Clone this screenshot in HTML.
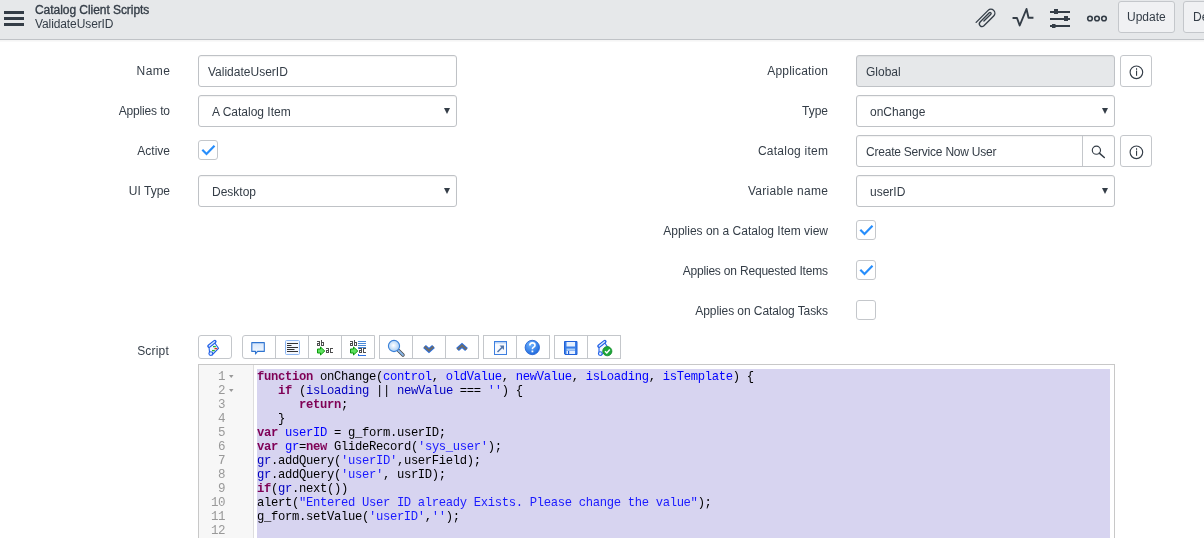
<!DOCTYPE html>
<html><head><meta charset="utf-8">
<style>
*{box-sizing:border-box}
html,body{margin:0;padding:0}
body{will-change:transform;width:1204px;height:538px;overflow:hidden;position:relative;background:#fff;font-family:"Liberation Sans",sans-serif;color:#343d47;font-size:12px}
.a{position:absolute}
.hdr{position:absolute;left:0;top:0;width:1204px;height:40px;background:#e6e8ea;border-bottom:1px solid #c0c3c7}
.shadow{position:absolute;left:0;top:40px;width:1204px;height:2px;background:linear-gradient(#f3f3f3,#fbfbfb)}
.bar{position:absolute;left:4px;width:20px;height:3px;background:#343d47}
.lbl{position:absolute;text-align:right;white-space:nowrap;line-height:14px}
.lbl.l{right:1034px}
.lbl.r{right:376px}
.fc{position:absolute;height:32px;border:1px solid #bfc2c6;border-radius:3px;background:#fff;box-shadow:inset 0 1px 1px rgba(0,0,0,.05);white-space:nowrap;line-height:14px}
.fc span{position:absolute;top:0}
.cb{position:absolute;width:20px;height:20px;border:1px solid #c4c7cb;border-radius:3px;background:#fff}
.tri{position:absolute;width:0;height:0;border-left:3px solid transparent;border-right:3px solid transparent;border-top:6px solid #343d47}
.ib{position:absolute;width:32px;height:32px;border:1px solid #c4c7cb;border-radius:3px;background:#fff}
.tb{position:absolute;top:335px;height:24px;border:1px solid #c4c7cb;background:#fff}
.tb.r{border-radius:3px}
.dv{position:absolute;top:335px;height:24px;width:1px;background:#c4c7cb}
.ed{position:absolute;left:198px;top:364px;width:917px;height:200px;border:1px solid #c8c8c8;background:#fff}
.gut{position:absolute;left:199px;top:365px;width:55px;height:180px;background:#f7f7f7;border-right:1px solid #ddd}
.sel{position:absolute;left:257px;top:369px;width:853px;height:180px;background:#d7d4f0}
.ln{position:absolute;left:199px;width:26px;text-align:right;font-family:"Liberation Mono",monospace;font-size:12.5px;letter-spacing:-0.5px;color:#999;line-height:14px}
.code{position:absolute;left:257px;top:370px;font-family:"Liberation Mono",monospace;font-size:12.2px;letter-spacing:-0.32px;line-height:14px;color:#000;white-space:pre}
.k{color:#7f0055;font-weight:bold}
.d{color:#0000ff}
.v2{color:#0000c0}
.s{color:#1a1aff}
</style></head><body>
<div class="hdr"></div>
<div class="shadow"></div>
<div class="bar" style="top:11px"></div>
<div class="bar" style="top:17px"></div>
<div class="bar" style="top:23px"></div>
<div class="a" style="left:35px;top:3px;font-size:12px;line-height:14px;letter-spacing:-0.05px;-webkit-text-stroke:0.35px #343d47;white-space:nowrap">Catalog Client Scripts</div>
<div class="a" style="left:35px;top:17px;font-size:12px;line-height:14px;letter-spacing:-0.1px;white-space:nowrap">ValidateUserID</div>

<div class="a" style="left:1118px;top:1px;width:57px;height:32px;border:1px solid #c4c7cb;border-radius:3px;background:#f0f1f3"></div>
<div class="a" style="left:1127px;top:10px;font-size:12px;line-height:14px;white-space:nowrap">Update</div>
<div class="a" style="left:1183px;top:1px;width:57px;height:32px;border:1px solid #c4c7cb;border-radius:3px;background:#f0f1f3"></div>
<div class="a" style="left:1193px;top:10px;font-size:12px;line-height:14px;white-space:nowrap">Delete</div>

<!-- left labels -->
<div class="lbl l" style="top:64px;letter-spacing:0.5px;margin-right:-0.5px">Name</div>
<div class="lbl l" style="top:104px;letter-spacing:-0.15px;margin-right:0.15px">Applies to</div>
<div class="lbl l" style="top:144px">Active</div>
<div class="lbl l" style="top:184px">UI Type</div>
<div class="lbl l" style="top:344px;letter-spacing:0.2px;margin-right:1px">Script</div>

<div class="fc" style="left:198px;top:55px;width:259px"><span style="left:9px;top:9px">ValidateUserID</span></div>
<div class="fc" style="left:198px;top:95px;width:259px"><span style="left:13px;top:9px">A Catalog Item</span><div class="tri" style="left:245px;top:12px"></div></div>
<div class="cb" style="left:198px;top:140px"></div>
<div class="fc" style="left:198px;top:175px;width:259px"><span style="left:13px;top:9px">Desktop</span><div class="tri" style="left:245px;top:12px"></div></div>

<!-- right labels -->
<div class="lbl r" style="top:64px;letter-spacing:0.2px;margin-right:-0.2px">Application</div>
<div class="lbl r" style="top:104px">Type</div>
<div class="lbl r" style="top:144px;letter-spacing:0.25px;margin-right:-0.25px">Catalog item</div>
<div class="lbl r" style="top:184px;letter-spacing:0.3px;margin-right:-0.3px">Variable name</div>
<div class="lbl r" style="top:224px">Applies on a Catalog Item view</div>
<div class="lbl r" style="top:264px;letter-spacing:-0.19px;margin-right:0.19px">Applies on Requested Items</div>
<div class="lbl r" style="top:304px;letter-spacing:-0.08px;margin-right:0.08px">Applies on Catalog Tasks</div>

<div class="fc" style="left:856px;top:55px;width:259px;background:#e6e8ea"><span style="left:9px;top:9px">Global</span></div>
<div class="ib" style="left:1120px;top:55px"></div>
<div class="fc" style="left:856px;top:95px;width:259px"><span style="left:13px;top:9px">onChange</span><div class="tri" style="left:245px;top:12px"></div></div>
<div class="fc" style="left:856px;top:135px;width:259px"><span style="left:9px;top:9px;letter-spacing:-0.22px">Create Service Now User</span><div style="position:absolute;left:225px;top:0;width:1px;height:30px;background:#c4c7cb"></div></div>
<div class="ib" style="left:1120px;top:135px"></div>
<div class="fc" style="left:856px;top:175px;width:259px"><span style="left:13px;top:9px">userID</span><div class="tri" style="left:245px;top:12px"></div></div>
<div class="cb" style="left:856px;top:220px"></div>
<div class="cb" style="left:856px;top:260px"></div>
<div class="cb" style="left:856px;top:300px"></div>

<!-- toolbar -->
<div class="tb r" style="left:198px;width:34px"></div>
<div class="tb" style="left:242px;width:133px;border-radius:3px 0 0 3px"></div>
<div class="dv" style="left:275px"></div><div class="dv" style="left:308px"></div><div class="dv" style="left:341px"></div>
<div class="tb" style="left:379px;width:100px"></div>
<div class="dv" style="left:412px"></div><div class="dv" style="left:445px"></div>
<div class="tb" style="left:483px;width:67px"></div>
<div class="dv" style="left:516px"></div>
<div class="tb" style="left:554px;width:67px"></div>
<div class="dv" style="left:587px"></div>

<!-- editor -->
<div class="ed"></div>
<div class="gut"></div>
<div class="sel"></div>
<div class="code"><span class="k">function</span> onChange(<span class="d">control</span>, <span class="d">oldValue</span>, <span class="d">newValue</span>, <span class="d">isLoading</span>, <span class="d">isTemplate</span>) {
   <span class="k">if</span> (<span class="v2">isLoading</span> || <span class="v2">newValue</span> === <span class="s">''</span>) {
      <span class="k">return</span>;
   }
<span class="k">var</span> <span class="d">userID</span> = g_form.userID;
<span class="k">var</span> <span class="d">gr</span>=<span class="k">new</span> GlideRecord(<span class="s">'sys_user'</span>);
<span class="v2">gr</span>.addQuery(<span class="s">'userID'</span>,userField);
<span class="v2">gr</span>.addQuery(<span class="s">'user'</span>, usrID);
<span class="k">if</span>(<span class="v2">gr</span>.next())
alert(<span class="s">"Entered User ID already Exists. Please change the value"</span>);
g_form.setValue(<span class="s">'userID'</span>,<span class="s">''</span>);
</div>
<svg class="a" style="left:0;top:0" width="1204" height="538"><path d="M229,375 h4.5 l-2.25,3 z M229,389 h4.5 l-2.25,3 z" fill="#999"/></svg>
<div class="ln" style="top:370px">1<br>2<br>3<br>4<br>5<br>6<br>7<br>8<br>9<br>10<br>11<br>12</div>

<svg class="a" style="left:0;top:0" width="1204" height="538" viewBox="0 0 1204 538">
 <g fill="none" stroke="#343d47" stroke-width="1.6" stroke-linecap="round" stroke-linejoin="round">
  <path stroke-width="1.35" d="M976.13,22.37 L988.11,10.38 A3.95,3.95 0 0 1 993.7,15.97 L983.9,25.76 A2.7,2.7 0 0 1 980.09,21.94 L989.31,12.72 A1.05,1.05 0 0 1 990.8,14.2 L983.9,21.1"/>
  <polyline stroke-width="1.9" stroke-linecap="square" points="1013.5,18 1017,18 1019.7,25.5 1026.5,9 1028.5,17.8 1032.5,17.8"/>
  <circle cx="1090" cy="18.5" r="2.3"/><circle cx="1097" cy="18.5" r="2.3"/><circle cx="1104" cy="18.5" r="2.3"/>
  <circle cx="1136.4" cy="72.3" r="6.3" stroke-width="1.15"/>
  <circle cx="1136.4" cy="152.3" r="6.3" stroke-width="1.15"/>
  <circle cx="1096.4" cy="150.2" r="4.1" stroke-width="1.15"/>
  <line x1="1099.3" y1="153.1" x2="1104.3" y2="157.5" stroke-width="1.5"/>
 </g>
 <g fill="#343d47">
  <rect x="1050" y="11" width="20" height="2"/><rect x="1054" y="9" width="4" height="5"/>
  <rect x="1050" y="18" width="20" height="2"/><rect x="1064" y="16" width="4" height="5"/>
  <rect x="1050" y="25" width="20" height="2"/><rect x="1052" y="24" width="3.5" height="4"/>
  <rect x="1136" y="68.2" width="1.1" height="1.6"/><rect x="1136" y="70.6" width="1.1" height="5.2"/>
  <rect x="1136" y="148.2" width="1.1" height="1.6"/><rect x="1136" y="150.6" width="1.1" height="5.2"/>
 </g>
 <g fill="none" stroke="#278efc" stroke-width="2.2" stroke-linecap="butt" stroke-linejoin="miter">
  <polyline points="202.3,149.8 206.5,154 214.5,145.8"/>
  <polyline points="860.3,229.8 864.5,234 872.5,225.8"/>
  <polyline points="860.3,269.8 864.5,274 872.5,265.8"/>
 </g>
</svg>

<svg class="a" style="left:0;top:0" width="1204" height="538" viewBox="0 0 1204 538">
 <defs>
  <linearGradient id="lb" x1="0" y1="0" x2="0" y2="1"><stop offset="0" stop-color="#d6e6fb"/><stop offset="1" stop-color="#f7fbff"/></linearGradient>
  <radialGradient id="mg" cx="0.45" cy="0.45" r="0.6"><stop offset="0" stop-color="#ffffff"/><stop offset="1" stop-color="#9cc8f5"/></radialGradient>
  <radialGradient id="hg" cx="0.4" cy="0.3" r="0.8"><stop offset="0" stop-color="#6fb3ff"/><stop offset="1" stop-color="#1560d8"/></radialGradient>
 </defs>
 <!-- scroll 1 -->
 <path d="M209,347 L214.5,342.5 L218.5,348.3 L212,355 L209.5,352 Z" fill="#f0f6ff" stroke="#1f5fe6" stroke-width="1.1" stroke-linejoin="round"/>
 <line x1="209" y1="346.2" x2="214.8" y2="341.6" stroke="#1f5fe6" stroke-width="3.6" stroke-linecap="round"/>
 <line x1="209.3" y1="346" x2="214.5" y2="341.8" stroke="#dfeaff" stroke-width="1.4" stroke-linecap="round"/>
 <circle cx="210.8" cy="353.6" r="1.9" fill="#dfeaff" stroke="#1f5fe6" stroke-width="1.1"/>
 <g stroke-width="1.3">
  <line x1="213" y1="346.6" x2="215.8" y2="346.6" stroke="#2ab52a"/>
  <line x1="214.5" y1="348.6" x2="217.2" y2="348.6" stroke="#e23b1a"/>
  <line x1="212" y1="350.6" x2="214.8" y2="350.6" stroke="#2ab52a"/>
 </g>
 <!-- comment -->
 <path d="M251.8,342.6 H264.3 V351.4 H257.5 L255.5,354 V351.4 H251.8 Z" fill="url(#lb)" stroke="#2f74d0" stroke-width="1.1" stroke-linejoin="round"/>
 <!-- format -->
 <rect x="285.5" y="340.5" width="14" height="14" rx="1" fill="#f4f8ff" stroke="#8cb6f2" stroke-width="1"/>
 <g stroke="#333" stroke-width="1">
  <line x1="287" y1="343.5" x2="298" y2="343.5"/><line x1="287" y1="345.5" x2="291.5" y2="345.5"/>
  <line x1="287" y1="347.5" x2="298" y2="347.5"/><line x1="287" y1="349.5" x2="294.5" y2="349.5"/>
  <line x1="287" y1="351.5" x2="298" y2="351.5"/>
 </g>
 <!-- replace -->
 <g fill="#4d4d4d"><rect x="317" y="341" width="1" height="1"/><rect x="318" y="341" width="1" height="1"/><rect x="319" y="341" width="1" height="1"/><rect x="319" y="342" width="1" height="1"/><rect x="317" y="343" width="1" height="1"/><rect x="318" y="343" width="1" height="1"/><rect x="319" y="343" width="1" height="1"/><rect x="317" y="344" width="1" height="1"/><rect x="319" y="344" width="1" height="1"/><rect x="317" y="345" width="1" height="1"/><rect x="318" y="345" width="1" height="1"/><rect x="319" y="345" width="1" height="1"/><rect x="321" y="340" width="1" height="1"/><rect x="321" y="341" width="1" height="1"/><rect x="321" y="342" width="1" height="1"/><rect x="322" y="342" width="1" height="1"/><rect x="323" y="342" width="1" height="1"/><rect x="321" y="343" width="1" height="1"/><rect x="323" y="343" width="1" height="1"/><rect x="321" y="344" width="1" height="1"/><rect x="323" y="344" width="1" height="1"/><rect x="321" y="345" width="1" height="1"/><rect x="322" y="345" width="1" height="1"/><rect x="323" y="345" width="1" height="1"/><rect x="326" y="348" width="1" height="1"/><rect x="327" y="348" width="1" height="1"/><rect x="328" y="348" width="1" height="1"/><rect x="328" y="349" width="1" height="1"/><rect x="326" y="350" width="1" height="1"/><rect x="327" y="350" width="1" height="1"/><rect x="328" y="350" width="1" height="1"/><rect x="326" y="351" width="1" height="1"/><rect x="328" y="351" width="1" height="1"/><rect x="326" y="352" width="1" height="1"/><rect x="327" y="352" width="1" height="1"/><rect x="328" y="352" width="1" height="1"/><rect x="330" y="348" width="1" height="1"/><rect x="331" y="348" width="1" height="1"/><rect x="332" y="348" width="1" height="1"/><rect x="330" y="349" width="1" height="1"/><rect x="330" y="350" width="1" height="1"/><rect x="330" y="351" width="1" height="1"/><rect x="330" y="352" width="1" height="1"/><rect x="331" y="352" width="1" height="1"/><rect x="332" y="352" width="1" height="1"/><rect x="350" y="341" width="1" height="1"/><rect x="351" y="341" width="1" height="1"/><rect x="352" y="341" width="1" height="1"/><rect x="352" y="342" width="1" height="1"/><rect x="350" y="343" width="1" height="1"/><rect x="351" y="343" width="1" height="1"/><rect x="352" y="343" width="1" height="1"/><rect x="350" y="344" width="1" height="1"/><rect x="352" y="344" width="1" height="1"/><rect x="350" y="345" width="1" height="1"/><rect x="351" y="345" width="1" height="1"/><rect x="352" y="345" width="1" height="1"/><rect x="354" y="340" width="1" height="1"/><rect x="354" y="341" width="1" height="1"/><rect x="354" y="342" width="1" height="1"/><rect x="355" y="342" width="1" height="1"/><rect x="356" y="342" width="1" height="1"/><rect x="354" y="343" width="1" height="1"/><rect x="356" y="343" width="1" height="1"/><rect x="354" y="344" width="1" height="1"/><rect x="356" y="344" width="1" height="1"/><rect x="354" y="345" width="1" height="1"/><rect x="355" y="345" width="1" height="1"/><rect x="356" y="345" width="1" height="1"/><rect x="359" y="348" width="1" height="1"/><rect x="360" y="348" width="1" height="1"/><rect x="361" y="348" width="1" height="1"/><rect x="361" y="349" width="1" height="1"/><rect x="359" y="350" width="1" height="1"/><rect x="360" y="350" width="1" height="1"/><rect x="361" y="350" width="1" height="1"/><rect x="359" y="351" width="1" height="1"/><rect x="361" y="351" width="1" height="1"/><rect x="359" y="352" width="1" height="1"/><rect x="360" y="352" width="1" height="1"/><rect x="361" y="352" width="1" height="1"/><rect x="363" y="348" width="1" height="1"/><rect x="364" y="348" width="1" height="1"/><rect x="365" y="348" width="1" height="1"/><rect x="363" y="349" width="1" height="1"/><rect x="363" y="350" width="1" height="1"/><rect x="363" y="351" width="1" height="1"/><rect x="363" y="352" width="1" height="1"/><rect x="364" y="352" width="1" height="1"/><rect x="365" y="352" width="1" height="1"/></g>
 <path d="M317.5,349 H320.5 V347 L324.8,351 L320.5,355 V353 H317.5 Z" fill="#5fe05f" stroke="#0a9a0a" stroke-width="1"/>
 <path d="M350.5,349 H353.5 V347 L357.8,351 L353.5,355 V353 H350.5 Z" fill="#5fe05f" stroke="#0a9a0a" stroke-width="1"/>
 <g fill="#4a8ad8">
  <rect x="358" y="341" width="8" height="1"/><rect x="358" y="343" width="8" height="1"/>
  <rect x="358" y="345" width="8" height="1"/><rect x="358" y="347" width="8" height="1"/>
  <rect x="358" y="348" width="1" height="1"/>
  <rect x="358" y="355" width="8" height="1" fill="#2d6fe0"/><rect x="358" y="354" width="1" height="1" fill="#2d6fe0"/>
 </g>
 <!-- search -->
 <line x1="398.5" y1="350.5" x2="403" y2="355" stroke="#444" stroke-width="3.4" stroke-linecap="round"/>
 <line x1="398.5" y1="350.5" x2="403" y2="355" stroke="#8ab8ea" stroke-width="1.8" stroke-linecap="round"/>
 <circle cx="394" cy="346" r="5.6" fill="url(#mg)" stroke="#3a80d8" stroke-width="1.1"/>
 <!-- chevrons -->
 <polyline points="424.5,346.5 429,350.5 433.5,346.5" fill="none" stroke="#2a6fe0" stroke-width="4.2" stroke-linejoin="miter"/>
 <polyline points="424.5,346.5 429,350.5 433.5,346.5" fill="none" stroke="#6b6b6b" stroke-width="2.2" stroke-linejoin="miter"/>
 <polyline points="457.5,349.5 462,345.5 466.5,349.5" fill="none" stroke="#2a6fe0" stroke-width="4.2" stroke-linejoin="miter"/>
 <polyline points="457.5,349.5 462,345.5 466.5,349.5" fill="none" stroke="#6b6b6b" stroke-width="2.2" stroke-linejoin="miter"/>
 <!-- fullscreen -->
 <rect x="494.5" y="341.5" width="12" height="13" fill="#f6f9ff" stroke="#3d7fe0" stroke-width="1"/>
 <line x1="495" y1="342.8" x2="506" y2="342.8" stroke="#a9c8f2" stroke-width="1.2"/>
 <line x1="497.5" y1="352" x2="503" y2="346.5" stroke="#5577aa" stroke-width="1.6"/>
 <path d="M499.5,345.5 H504 V350 Z" fill="#5577aa"/>
 <!-- help -->
 <circle cx="532.3" cy="347.5" r="7.2" fill="url(#hg)" stroke="#1a5cd0" stroke-width="0.8"/>
 <path d="M529.8,345.6 Q529.8,342.9 532.4,342.9 Q535,342.9 535,345.2 Q535,346.6 533.3,347.4 Q532.4,347.9 532.4,349.3" fill="none" stroke="#fff" stroke-width="1.6"/>
 <rect x="531.5" y="350.5" width="1.8" height="1.8" fill="#fff"/>
 <!-- save -->
 <path d="M564.5,341.5 H577 V354.5 H565 L564.5,354 Z" fill="#3a7fe8" stroke="#2060d8" stroke-width="1"/>
 <rect x="566.5" y="342" width="8.5" height="4.5" fill="#e6f0ff"/>
 <rect x="566.5" y="348.5" width="8.5" height="1.5" fill="#a8cdf8"/>
 <rect x="566.5" y="350.5" width="8.5" height="3.5" fill="#e6f0ff"/>
 <rect x="568" y="351" width="1.2" height="3" fill="#2060d8"/>
 <!-- scroll check -->
 <path d="M599,347 L604.5,342.5 L608,347.5 L601.5,355 L599,352 Z" fill="#f0f6ff" stroke="#1f5fe6" stroke-width="1.1" stroke-linejoin="round"/>
 <line x1="599" y1="346.2" x2="604.8" y2="341.6" stroke="#1f5fe6" stroke-width="3.6" stroke-linecap="round"/>
 <line x1="599.3" y1="346" x2="604.5" y2="341.8" stroke="#dfeaff" stroke-width="1.4" stroke-linecap="round"/>
 <circle cx="600.3" cy="353.6" r="1.9" fill="#dfeaff" stroke="#1f5fe6" stroke-width="1.1"/>
 <circle cx="607.3" cy="351.2" r="4.6" fill="#1ea63a" stroke="#128a2a" stroke-width="0.8"/>
 <polyline points="605,351.2 606.8,353 609.8,349.5" fill="none" stroke="#fff" stroke-width="1.5"/>
</svg>

</body></html>
